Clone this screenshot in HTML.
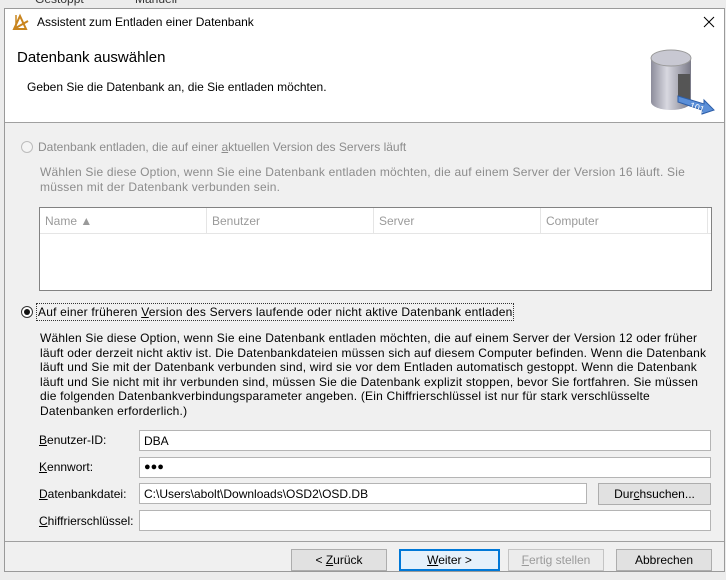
<!DOCTYPE html>
<html><head><meta charset="utf-8"><style>
*{box-sizing:border-box;margin:0;padding:0}
body{width:726px;height:580px;background:#ececec;font-family:"Liberation Sans",sans-serif;font-size:12px;color:#000;position:relative;overflow:hidden}
.a{position:absolute;white-space:nowrap}
.win{position:absolute;left:4px;top:8px;width:721px;height:564px;border:1px solid #9a9a9a;background:#f0f0f0}
.inp{position:absolute;background:#fff;border:1px solid #b4b4b4;height:21px;padding:3px 4px;font-size:12px}
.btn{position:absolute;height:22px;border:1px solid #adadad;background:#e1e1e1;text-align:center;line-height:20px;font-size:12px}
u{text-decoration:underline}
.p{letter-spacing:0.2px}
</style></head><body>
<div class="a" style="left:35px;top:-8px;color:#333">Gestoppt</div>
<div class="a" style="left:135px;top:-8px;color:#333">Manuell</div>
<div class="win">
 <div style="position:absolute;left:0;top:0;width:719px;height:114px;background:#fff;border-bottom:1px solid #a0a0a0"></div>
 <svg class="a" style="left:7px;top:4px" width="18" height="18" viewBox="0 0 18 18"><path d="M2 16 L8 3 L14 16 Z M2 16 L16 8" fill="none" stroke="#c9851e" stroke-width="2"/><path d="M4 2 L4 16" stroke="#c9851e" stroke-width="1.5"/></svg>
 <div class="a" style="left:32px;top:6px">Assistent zum Entladen einer Datenbank</div>
 <svg class="a" style="left:698px;top:7px" width="12" height="12" viewBox="0 0 12 12"><path d="M1 1 L11 11 M11 1 L1 11" stroke="#000" stroke-width="1"/></svg>
 <div class="a" style="left:12px;top:40px;font-size:15px">Datenbank auswählen</div>
 <div class="a" style="left:22px;top:71px">Geben Sie die Datenbank an, die Sie entladen möchten.</div>
 <svg class="a" style="left:643px;top:35px" width="70" height="72" viewBox="0 0 70 72">
  <defs><linearGradient id="g" x1="0" x2="1"><stop offset="0" stop-color="#8d8d9c"/><stop offset=".4" stop-color="#d8d8e0"/><stop offset="1" stop-color="#7a7a88"/></linearGradient></defs>
  <path d="M3 14 V58 A20 8 0 0 0 43 58 V14 Z" fill="url(#g)"/>
  <ellipse cx="23" cy="14" rx="20" ry="8" fill="#c8c8d2" stroke="#999"/>
  <rect x="30" y="30" width="12" height="26" fill="#555"/>
  <path d="M30 52 L56 60 L56 56 L66 66 L54 70 L54 66 L30 58Z" fill="#5b8fd8" stroke="#2d5ea8"/>
  <text x="42" y="66" font-size="9" fill="#fff" transform="rotate(20 48 62)" font-family="Liberation Sans">101</text>
 </svg>
 <div class="a" style="left:16px;top:132px;width:12px;height:12px;border:1px solid #bcbcbc;border-radius:50%;background:#f4f4f4"></div>
 <div class="a" style="left:33px;top:131px;color:#8c8c8c">Datenbank entladen, die auf einer <u>a</u>ktuellen Version des Servers läuft</div>
 <div class="a p" style="left:35px;top:156px;color:#8c8c8c;line-height:15px">Wählen Sie diese Option, wenn Sie eine Datenbank entladen möchten, die auf einem Server der Version 16 läuft. Sie<br>müssen mit der Datenbank verbunden sein.</div>
 <div style="position:absolute;left:34px;top:198px;width:673px;height:84px;background:#fff;border:1px solid #828282">
  <div style="display:flex;height:26px;border-bottom:1px solid #e5e5e5;color:#9a9a9a">
   <div style="width:167px;border-right:1px solid #e5e5e5;padding:6px 5px">Name ▲</div>
   <div style="width:167px;border-right:1px solid #e5e5e5;padding:6px 5px">Benutzer</div>
   <div style="width:167px;border-right:1px solid #e5e5e5;padding:6px 5px">Server</div>
   <div style="width:167px;border-right:1px solid #e5e5e5;padding:6px 5px">Computer</div>
  </div>
 </div>
 <div class="a" style="left:16px;top:297px;width:12px;height:12px;border:1px solid #333;border-radius:50%;background:#fff"><div style="position:absolute;left:2px;top:2px;width:6px;height:6px;border-radius:50%;background:#111"></div></div>
 <div class="a p" style="left:32px;top:295px;outline:1px dotted #333;padding:1px">Auf einer früheren <u>V</u>ersion des Servers laufende oder nicht aktive Datenbank entladen</div>
 <div class="a p" style="left:35px;top:322px;line-height:14.6px">Wählen Sie diese Option, wenn Sie eine Datenbank entladen möchten, die auf einem Server der Version 12 oder früher<br>läuft oder derzeit nicht aktiv ist. Die Datenbankdateien müssen sich auf diesem Computer befinden. Wenn die Datenbank<br>läuft und Sie mit der Datenbank verbunden sind, wird sie vor dem Entladen automatisch gestoppt. Wenn die Datenbank<br>läuft und Sie nicht mit ihr verbunden sind, müssen Sie die Datenbank explizit stoppen, bevor Sie fortfahren. Sie müssen<br>die folgenden Datenbankverbindungsparameter angeben. (Ein Chiffrierschlüssel ist nur für stark verschlüsselte<br>Datenbanken erforderlich.)</div>
 <div class="a" style="left:34px;top:424px"><u>B</u>enutzer-ID:</div>
 <div class="inp" style="left:134px;top:421px;width:572px">DBA</div>
 <div class="a" style="left:34px;top:451px"><u>K</u>ennwort:</div>
 <div class="inp" style="left:134px;top:448px;width:572px;font-size:11px">●●●</div>
 <div class="a" style="left:34px;top:478px"><u>D</u>atenbankdatei:</div>
 <div class="inp" style="left:134px;top:474px;width:448px">C:\Users\abolt\Downloads\OSD2\OSD.DB</div>
 <div class="btn" style="left:593px;top:474px;width:113px">Dur<u>c</u>hsuchen...</div>
 <div class="a" style="left:34px;top:505px"><u>C</u>hiffrierschlüssel:</div>
 <div class="inp" style="left:134px;top:501px;width:572px"></div>
 <div style="position:absolute;left:0;top:532px;width:719px;border-top:1px solid #a0a0a0"></div>
 <div class="btn" style="left:286px;top:540px;width:96px">&lt; <u>Z</u>urück</div>
 <div class="btn" style="left:394px;top:540px;width:101px;border:2px solid #0078d7;background:#e5f1fb;line-height:18px"><u>W</u>eiter &gt;</div>
 <div class="btn" style="left:503px;top:540px;width:96px;color:#9a9a9a;border-color:#c4c4c4;background:#ececec"><u>F</u>ertig stellen</div>
 <div class="btn" style="left:611px;top:540px;width:96px">Abbrechen</div>
</div>
</body></html>
